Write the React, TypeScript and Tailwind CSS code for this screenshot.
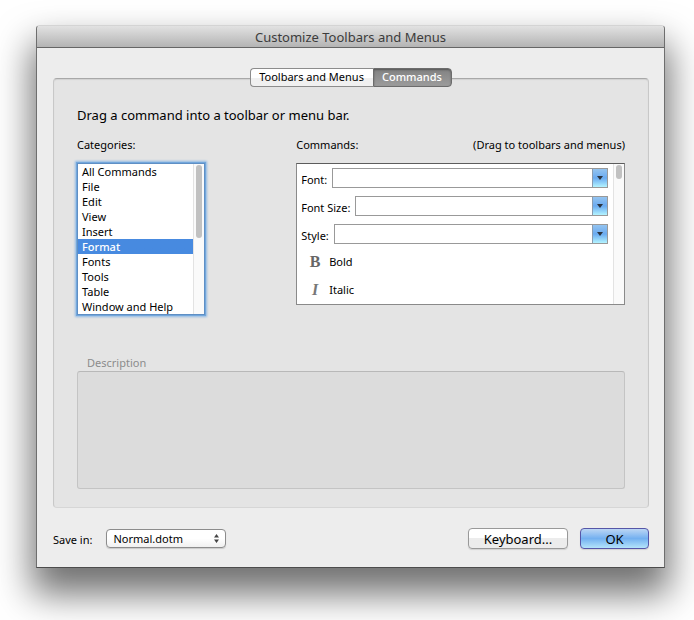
import { useState } from "react";
import clsx from "clsx";

const categories = [
  "All Commands",
  "File",
  "Edit",
  "View",
  "Insert",
  "Format",
  "Fonts",
  "Tools",
  "Table",
  "Window and Help",
];

const combos = [
  { id: "font", label: "Font:" },
  { id: "font-size", label: "Font Size:" },
  { id: "style", label: "Style:" },
];

const tabs = ["Toolbars and Menus", "Commands"];

function Scrollbar({ children }: { children: React.ReactNode }) {
  return (
    <div className="w-[11px] shrink-0 border-l border-[#e3e3e3] bg-[#fafafa] pt-px pl-[2px]">
      {children}
    </div>
  );
}

function Tabs() {
  const [active, setActive] = useState("Commands");

  return (
    <div role="tablist" className="-mt-[11px] flex h-[19px] justify-center">
      {tabs.map((tab) => (
        <button
          key={tab}
          role="tab"
          aria-selected={tab === active}
          onClick={() => setActive(tab)}
          className={clsx(
            "border pr-[9px] pb-px pl-2 text-[11px] leading-4 first:rounded-l first:border-r-0 last:rounded-r",
            tab === active
              ? "border-[#6c6c6c] bg-linear-to-b from-[#828282] to-[#9c9c9c] font-medium text-white shadow-[inset_0_1px_2px_rgba(0,0,0,0.35)]"
              : "border-[#8c8c8c] bg-linear-to-b from-white from-50% to-[#f0f0f0] to-50% text-black"
          )}
        >
          {tab}
        </button>
      ))}
    </div>
  );
}

function CategoryList() {
  const [selected, setSelected] = useState("Format");

  return (
    <div className="flex h-[152px] w-32 border border-[#5f8fc4] bg-white shadow-[0_0_0_1px_#73a7dc,0_0_2px_2px_#8fb9e4]">
      <select
        id="categories"
        size={10}
        value={selected}
        onChange={(e) => setSelected(e.target.value)}
        className="min-w-0 flex-1 appearance-none overflow-hidden text-[11px] outline-none [scrollbar-width:none]"
      >
        {categories.map((c) => (
          <option
            key={c}
            value={c}
            className="h-[15px] min-h-0 px-1 py-0 leading-[15px] checked:bg-linear-to-b checked:from-[#478ae0] checked:to-[#478ae0] checked:font-medium checked:[-webkit-text-fill-color:white]"
          >
            {c}
          </option>
        ))}
      </select>
      <Scrollbar>
        <div className="h-[73px] w-[6px] rounded-full bg-[#c1c1c1]" />
      </Scrollbar>
    </div>
  );
}

function ComboRow({ id, label }: { id: string; label: string }) {
  return (
    <div className="flex h-5 items-center gap-[5px]">
      <label htmlFor={id} className="pt-1 leading-4">
        {label}
      </label>
      <div className="flex h-5 min-w-0 flex-1 border border-[#999]">
        <input id={id} type="text" className="min-w-0 flex-1 px-1 outline-none" />
        <button
          aria-label={`${label} list`}
          className="flex w-[15px] items-center justify-center border-l border-[#8a9cb0] bg-linear-to-b from-[#94c4f0] via-[#6aaaf0] via-50% to-[#b4f4ff]"
        >
          <svg width="6" height="4" viewBox="0 0 6 4" aria-hidden="true">
            <path d="M0 0h6L3 4z" fill="#2b3440" />
          </svg>
        </button>
      </div>
    </div>
  );
}

function CommandList() {
  return (
    <div className="flex h-[142px] border border-[#8a8a8a] border-t-[#5c5c5c] bg-white">
      <div className="flex min-w-0 flex-1 flex-col gap-2 pt-1 pr-[5px] pl-1">
        {combos.map((c) => (
          <ComboRow key={c.id} id={c.id} label={c.label} />
        ))}
        <button className="flex h-5 items-center text-left">
          <span className="w-7 text-center font-['Liberation_Serif',serif] text-base leading-5 font-bold text-[#666]">
            B
          </span>
          Bold
        </button>
        <button className="flex h-5 items-center text-left">
          <span className="w-7 text-center font-['Liberation_Serif',serif] text-base leading-5 font-bold text-[#777] italic">
            I
          </span>
          Italic
        </button>
      </div>
      <Scrollbar>
        <div className="h-[14px] w-[6px] rounded-full bg-[#c1c1c1]" />
      </Scrollbar>
    </div>
  );
}

export default function App() {
  return (
    <div className="overflow-hidden bg-white pt-[25px] pr-[29px] pb-[52px] pl-9 font-['Noto_Sans',sans-serif] text-[11px] text-black">
      <main className="rounded-t border border-[#6e6e6e] border-t-[#d4d4d4] border-b-[#4c4c4c] bg-[#ededed] shadow-[0_22px_36px_4px_rgba(0,0,0,0.56)]">
        <h1 className="h-[22px] rounded-t border-b border-[#666] bg-linear-to-b from-[#e2e2e2] to-[#b4b4b4] text-center text-[13px] leading-[22px] text-[#3c3c3c]">
          Customize Toolbars and Menus
        </h1>

        <div className="pt-[30px] pr-[15px] pb-[18px] pl-4">
          <section className="rounded border border-[#c8c8c8] border-t-[#a8a8a8] border-b-[#d6d6d6] bg-[#e4e4e4] px-[23px] pb-[18px] shadow-[inset_0_1px_1px_rgba(0,0,0,0.08)]">
            <Tabs />

            <p className="mt-[18px] text-[13px] leading-5">
              Drag a command into a toolbar or menu bar.
            </p>

            <div className="mt-3 flex justify-between">
              <div>
                <label htmlFor="categories" className="mb-[10px] block leading-4">
                  Categories:
                </label>
                <CategoryList />
              </div>
              <div className="w-3/5">
                <div className="mb-[10px] flex justify-between leading-4">
                  <span>Commands:</span>
                  <span>(Drag to toolbars and menus)</span>
                </div>
                <CommandList />
              </div>
            </div>

            <h2 className="mt-10 pl-[10px] leading-4 text-[#8c8c8c]">
              Description
            </h2>
            <div className="h-[118px] rounded-[3px] border border-[#c4c4c4] border-t-[#b8b8b8] bg-[#dcdcdc]" />
          </section>

          <footer className="mt-5 flex items-center">
            <label htmlFor="save-in" className="mr-[14px] pt-1">
              Save in:
            </label>
            <div className="relative">
              <select
                id="save-in"
                className="block h-[19px] w-[120px] appearance-none rounded border border-[#8c8c8c] bg-linear-to-b from-white from-50% to-[#f0f0f0] pl-[6px] text-[11px] leading-4 shadow-[0_1px_1px_rgba(0,0,0,0.15)]"
              >
                <option>Normal.dotm</option>
              </select>
              <svg
                width="5"
                height="9"
                viewBox="0 0 5 9"
                aria-hidden="true"
                className="pointer-events-none absolute top-[5px] right-[7px]"
              >
                <path d="M0 3.500L2.500 0L5 3.500zM0 5.500L2.500 9L5 5.500z" fill="#444" />
              </svg>
            </div>
            <button className="ml-auto h-[21px] w-[100px] rounded border border-[#999] bg-linear-to-b from-white from-50% to-[#ececec] to-50% text-[13px] leading-[18px] shadow-[0_1px_1px_rgba(0,0,0,0.12)]">
              Keyboard...
            </button>
            <button className="ml-3 h-[21px] w-[69px] rounded border border-[#5656a8] bg-linear-to-b from-[#bcd6f4] via-[#73b0f0] via-50% to-[#b4e4fa] text-[13px] leading-[18px] shadow-[0_1px_1px_rgba(0,0,0,0.12)]">
              OK
            </button>
          </footer>
        </div>
      </main>
    </div>
  );
}
